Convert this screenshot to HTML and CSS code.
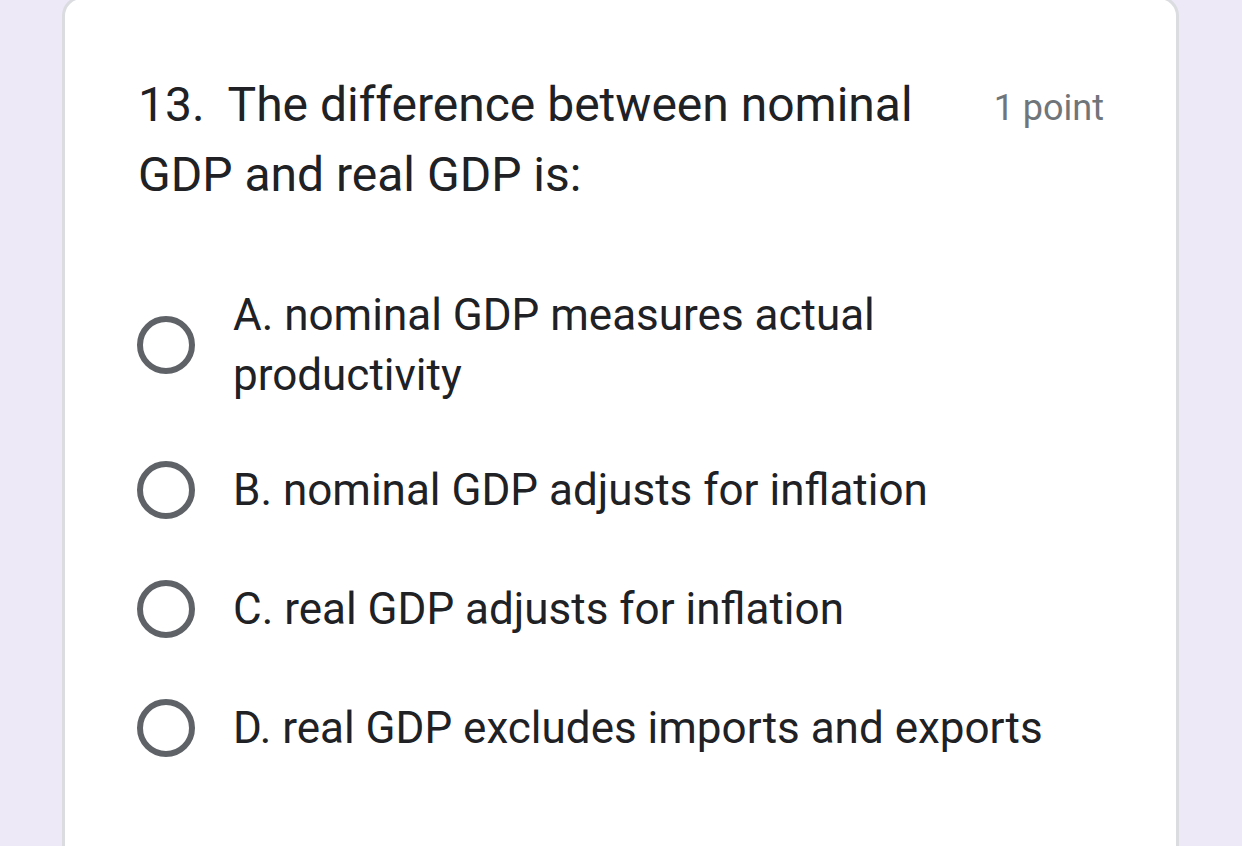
FILE: index.html
```html
<!DOCTYPE html>
<html lang="en">
<head>
<meta charset="utf-8">
<title>Question 13</title>
<link rel="stylesheet" href="styles.css">
</head>
<body>
<div class="card">
  <div class="header">
    <div class="title">13.&nbsp; The difference between nominal GDP and real GDP is:</div>
    <div class="points">1 point</div>
  </div>
  <div class="options">
    <label class="option">
      <span class="radio"></span>
      <span class="text">A. nominal GDP measures actual productivity</span>
    </label>
    <label class="option">
      <span class="radio"></span>
      <span class="text">B. nominal GDP adjusts for inflation</span>
    </label>
    <label class="option">
      <span class="radio"></span>
      <span class="text">C. real GDP adjusts for inflation</span>
    </label>
    <label class="option">
      <span class="radio"></span>
      <span class="text">D. real GDP excludes imports and exports</span>
    </label>
  </div>
</div>
</body>
</html>
```

FILE: styles.css
```css
html, body {
  margin: 0;
  padding: 0;
  height: 100%;
  overflow: hidden;
}
body {
  background: #ede9f7;
  font-family: Roboto, "Noto Sans", Arial, sans-serif;
  color: #202124;
}
.card {
  box-sizing: border-box;
  margin: -4px 0 0 62px;
  width: 1117px;
  min-height: 900px;
  background: #ffffff;
  border: 3px solid #dadce0;
  border-radius: 20px;
  padding: 71px 72px 0 73px;
}
.header {
  display: flex;
  align-items: flex-start;
}
.title {
  flex: 1;
  font-size: 48px;
  line-height: 70px;
  padding-right: 60px;
}
.points {
  font-size: 36px;
  line-height: 70px;
  padding-top: 3px;
  color: #70757a;
  white-space: nowrap;
}
.options {
  display: flex;
  flex-direction: column;
  gap: 51px;
  margin-top: 75px;
}
.option {
  display: flex;
  align-items: center;
  min-height: 68px;
}
.radio {
  box-sizing: border-box;
  flex: none;
  width: 58px;
  height: 58px;
  border: 6px solid #5f6368;
  border-radius: 50%;
  margin-left: -1px;
  margin-right: 38px;
}
.text {
  font-size: 44px;
  line-height: 60px;
}
```
